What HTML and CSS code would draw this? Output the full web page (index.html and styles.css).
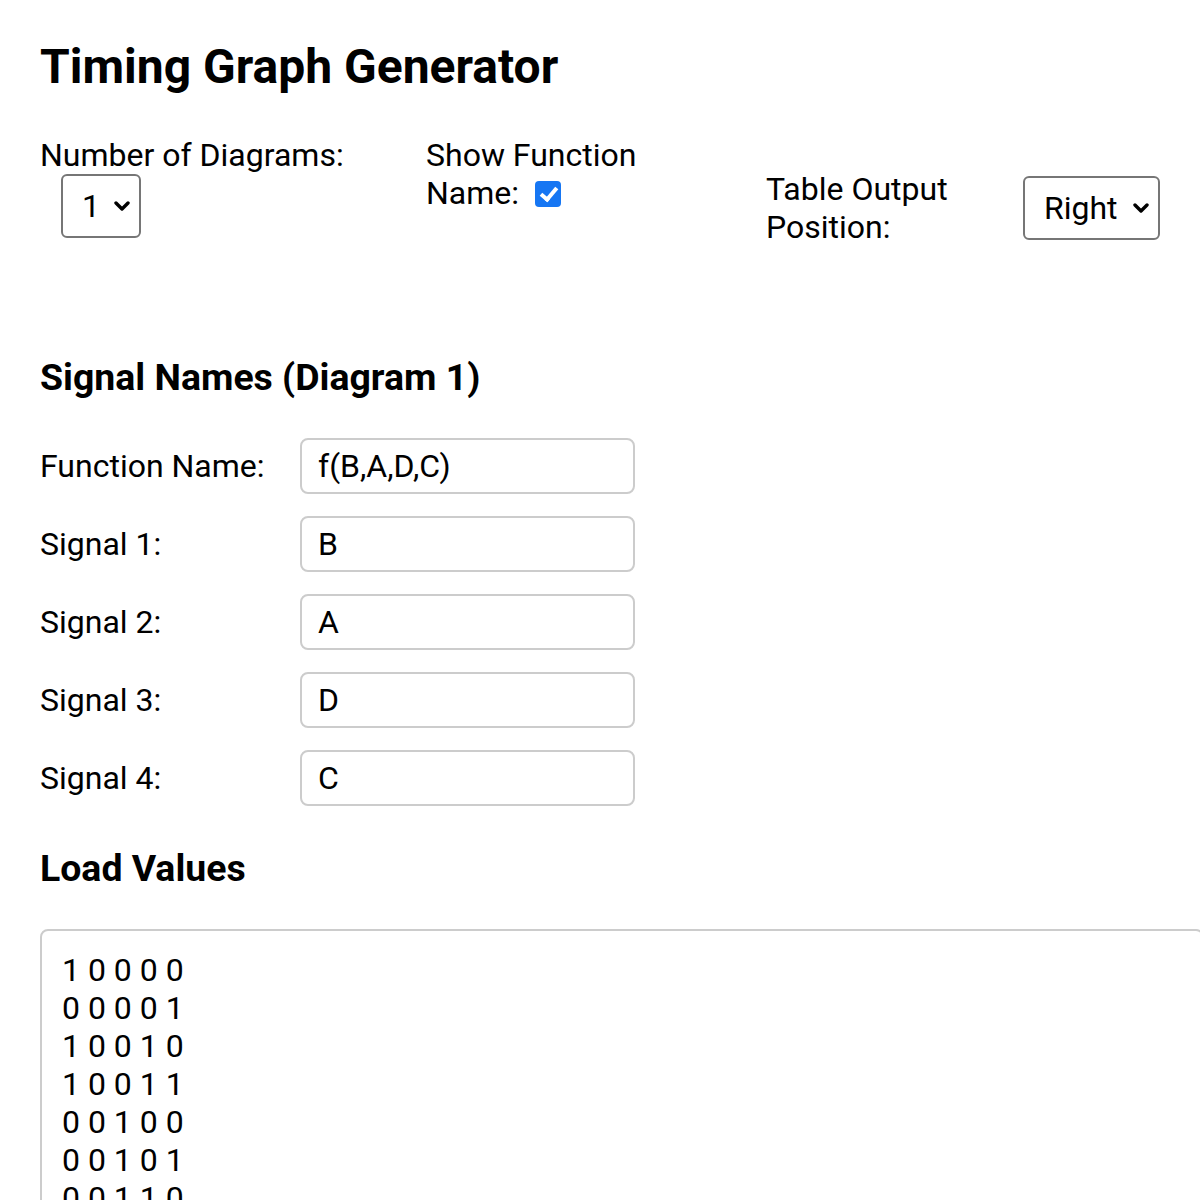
FILE: index.html
```html
<!DOCTYPE html>
<html lang="en">
<head>
  <meta charset="UTF-8" />
  <title>Timing Graph Generator</title>
  <link rel="stylesheet" href="styles.css">
</head>
<body>
  <div class="page">
    <h1>Timing Graph Generator</h1>

    <div class="controls">
      <div class="control control-count">
        <label for="diagram-count">Number of Diagrams:</label>
        <div class="select-wrap select-count">
          <select id="diagram-count">
            <option>1</option>
            <option>2</option>
            <option>3</option>
          </select>
          <svg class="chevron" viewBox="0 0 16 10" aria-hidden="true"><path d="M2 2l6 6 6-6" /></svg>
        </div>
      </div>

      <div class="control control-show">
        <label for="show-name">Show Function Name:</label><input type="checkbox" id="show-name" class="check" checked />
      </div>

      <div class="control control-position">
        <label for="table-position">Table Output Position:</label>
        <div class="select-wrap select-position">
          <select id="table-position">
            <option>Right</option>
            <option>Left</option>
          </select>
          <svg class="chevron" viewBox="0 0 16 10" aria-hidden="true"><path d="M2 2l6 6 6-6" /></svg>
        </div>
      </div>
    </div>

    <h3>Signal Names (Diagram 1)</h3>

    <div class="signals">
      <label for="fn-name">Function Name:</label>
      <input type="text" id="fn-name" value="f(B,A,D,C)" />
      <label for="sig-1">Signal 1:</label>
      <input type="text" id="sig-1" value="B" />
      <label for="sig-2">Signal 2:</label>
      <input type="text" id="sig-2" value="A" />
      <label for="sig-3">Signal 3:</label>
      <input type="text" id="sig-3" value="D" />
      <label for="sig-4">Signal 4:</label>
      <input type="text" id="sig-4" value="C" />
    </div>

    <h3 class="load-title">Load Values</h3>

    <textarea class="values" rows="16" spellcheck="false">1 0 0 0 0
0 0 0 0 1
1 0 0 1 0
1 0 0 1 1
0 0 1 0 0
0 0 1 0 1
0 0 1 1 0
1 0 1 1 1
0 1 0 0 0
1 1 0 0 1
0 1 0 1 0
0 1 0 1 1
1 1 1 0 0
0 1 1 0 1
1 1 1 1 0
0 1 1 1 1</textarea>
  </div>
</body>
</html>
```

FILE: styles.css
```css
html {
  overflow: hidden;
}

body {
  margin: 0;
  font-family: Roboto, "Liberation Sans", Arial, sans-serif;
  font-size: 32px;
  color: #000;
  background: #fff;
}

.page {
  padding: 38px 40px 0;
}

h1 {
  font-size: 48px;
  font-weight: 700;
  margin: 0 0 41px;
}

h3 {
  font-size: 37.44px;
  font-weight: 700;
  margin: 0 0 39px;
}

/* top options row */
.controls {
  display: flex;
  align-items: flex-start;
  margin-bottom: 109px;
}

.control-count {
  width: 346px;
  margin-right: 40px;
}

.control-show {
  width: 300px;
  margin-right: 40px;
}

.control-position {
  flex: 1;
  display: flex;
  align-items: center;
  margin-top: 34px;
}

.control-count label {
  display: block;
}

.select-wrap {
  position: relative;
  display: inline-block;
}

.select-count {
  display: block;
  width: 80px;
  margin: 0 0 0 21px;
}

.select-position {
  flex-shrink: 0;
  width: 137px;
}

.select-wrap select {
  appearance: none;
  -webkit-appearance: none;
  width: 100%;
  height: 64px;
  box-sizing: border-box;
  padding: 0 30px 0 19px;
  font-family: inherit;
  font-size: 32px;
  color: #000;
  background: #fff;
  border: 2px solid #767676;
  border-radius: 6px;
}

.chevron {
  position: absolute;
  right: 11px;
  top: 27px;
  width: 16px;
  height: 10px;
  pointer-events: none;
}

.chevron path {
  fill: none;
  stroke: #000;
  stroke-width: 3.4;
  stroke-linecap: round;
  stroke-linejoin: round;
}

.check {
  appearance: none;
  -webkit-appearance: none;
  position: relative;
  width: 26px;
  height: 26px;
  margin: 0 0 0 16px;
  vertical-align: -3px;
  background: #1676f3;
  border-radius: 4px;
}

.check::after {
  content: "";
  position: absolute;
  left: 9px;
  top: 3px;
  width: 6px;
  height: 13px;
  border: solid #fff;
  border-width: 0 4px 4px 0;
  transform: rotate(40deg);
}

/* signal name fields */
.signals {
  display: grid;
  grid-template-columns: 260px 335px;
  row-gap: 22px;
  align-items: center;
}

.signals input {
  height: 56px;
  box-sizing: border-box;
  padding: 0 16px;
  font-family: inherit;
  font-size: 32px;
  color: #000;
  border: 2px solid #ccc;
  border-radius: 8px;
}

.load-title {
  margin-top: 40px;
}

.values {
  display: block;
  width: 100%;
  padding: 20px;
  font-family: inherit;
  font-size: 32px;
  line-height: normal;
  color: #000;
  border: 2px solid #ccc;
  border-radius: 8px;
  resize: none;
}
```
